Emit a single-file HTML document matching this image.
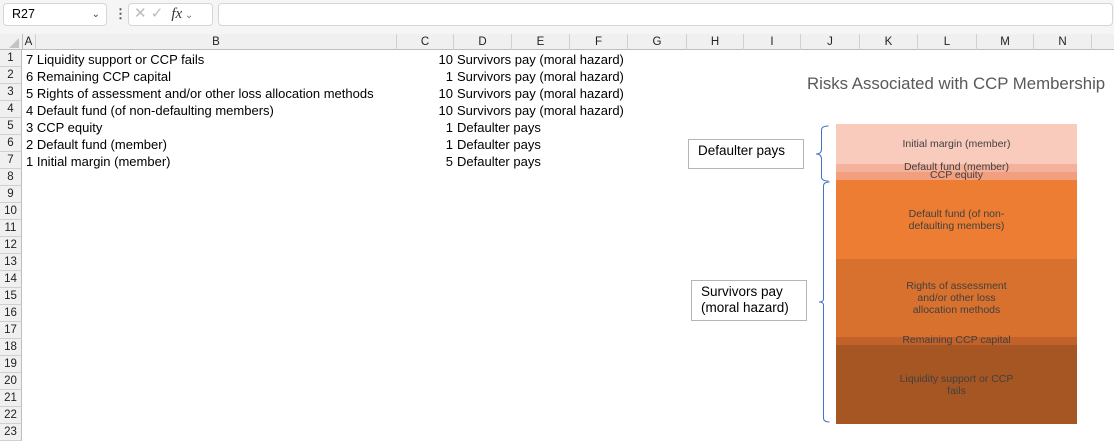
<!DOCTYPE html><html><head><style>
*{margin:0;padding:0;box-sizing:border-box}
body{width:1114px;height:432px;overflow:hidden;background:#fff;font-family:"Liberation Sans",Arial,sans-serif;position:relative}
.a{position:absolute}
.top{left:0;top:0;width:1114px;height:34px;background:#f5f5f5}
.box{background:#fff;border:1px solid #d6d6d6;border-radius:4px}
.hdr{left:0;top:34px;width:1114px;height:16px;background:#f0f0f0;border-bottom:1px solid #bdbdbd}
.ch{top:34px;height:16px;font-size:11.5px;text-align:center;line-height:16px;color:#222;border-right:1px solid #d0d0d0}
.rh{left:0;width:22px;height:17px;background:#f0f0f0;border-right:1px solid #bdbdbd;border-bottom:1px solid #d0d0d0;font-size:11.5px;text-align:center;line-height:17px;color:#222}
.t{font-size:13px;line-height:17px;color:#000;white-space:nowrap}
.seg{left:836px;width:241px;color:#404040;font-size:10.5px;text-align:center;line-height:12px;display:flex;align-items:center;justify-content:center}
.lab{background:#fff;border:1px solid #b5b5b5;font-size:13.5px;line-height:16px;padding:3px 9px;color:#000}
.sl{left:836px;width:241px;text-align:center;font-size:10.5px;color:#404040}
</style></head><body>
<div class="a top"></div>
<div class="a box" style="left:3px;top:3px;width:104px;height:23px;font-size:12.5px;line-height:21px;padding-left:8px">R27<span style="position:absolute;right:6px;top:0;font-size:10px;color:#444">&#8964;</span></div>
<div class="a" style="left:114px;top:6px;font-size:13px;font-weight:bold;color:#555">&#8942;</div>
<div class="a box" style="left:128px;top:3px;width:85px;height:23px;color:#bbb;font-size:15px;line-height:20px;padding-left:5px">&#10005;&nbsp;&#10003;<span style="color:#333;font-family:'Liberation Serif',serif;font-style:italic;font-size:15px;margin-left:8px">fx</span><span style="font-size:10px;color:#777"> &#8964;</span></div>
<div class="a box" style="left:218px;top:3px;width:895px;height:23px"></div>
<div class="a hdr"></div>
<svg class="a" style="left:6px;top:38px" width="14" height="11"><polygon points="13,0 13,10 3,10" fill="#c4c4c4"/></svg>
<div class="a" style="left:22px;top:34px;width:1px;height:16px;background:#bdbdbd"></div>
<div class="a ch" style="left:22px;width:14px">A</div>
<div class="a ch" style="left:36px;width:361px">B</div>
<div class="a ch" style="left:397px;width:57px">C</div>
<div class="a ch" style="left:454px;width:58px">D</div>
<div class="a ch" style="left:512px;width:58px">E</div>
<div class="a ch" style="left:570px;width:58px">F</div>
<div class="a ch" style="left:628px;width:59px">G</div>
<div class="a ch" style="left:687px;width:57px">H</div>
<div class="a ch" style="left:744px;width:57px">I</div>
<div class="a ch" style="left:801px;width:59px">J</div>
<div class="a ch" style="left:860px;width:58px">K</div>
<div class="a ch" style="left:918px;width:59px">L</div>
<div class="a ch" style="left:977px;width:57px">M</div>
<div class="a ch" style="left:1034px;width:58px">N</div>
<div class="a rh" style="top:50px">1</div><div class="a rh" style="top:67px">2</div><div class="a rh" style="top:84px">3</div><div class="a rh" style="top:101px">4</div><div class="a rh" style="top:118px">5</div><div class="a rh" style="top:135px">6</div><div class="a rh" style="top:152px">7</div><div class="a rh" style="top:169px">8</div><div class="a rh" style="top:186px">9</div><div class="a rh" style="top:203px">10</div><div class="a rh" style="top:220px">11</div><div class="a rh" style="top:237px">12</div><div class="a rh" style="top:254px">13</div><div class="a rh" style="top:271px">14</div><div class="a rh" style="top:288px">15</div><div class="a rh" style="top:305px">16</div><div class="a rh" style="top:322px">17</div><div class="a rh" style="top:339px">18</div><div class="a rh" style="top:356px">19</div><div class="a rh" style="top:373px">20</div><div class="a rh" style="top:390px">21</div><div class="a rh" style="top:407px">22</div><div class="a rh" style="top:424px">23</div>
<div class="a" style="left:26px;top:51px">
<div class="t">7 Liquidity support or CCP fails</div><div class="t">6 Remaining CCP capital</div><div class="t">5 Rights of assessment and/or other loss allocation methods</div><div class="t">4 Default fund (of non-defaulting members)</div><div class="t">3 CCP equity</div><div class="t">2 Default fund (member)</div><div class="t">1 Initial margin (member)</div></div>
<div class="a" style="left:400px;top:51px;width:53px;text-align:right">
<div class="t">10</div><div class="t">1</div><div class="t">10</div><div class="t">10</div><div class="t">1</div><div class="t">1</div><div class="t">5</div></div>
<div class="a" style="left:457px;top:51px">
<div class="t">Survivors pay (moral hazard)</div><div class="t">Survivors pay (moral hazard)</div><div class="t">Survivors pay (moral hazard)</div><div class="t">Survivors pay (moral hazard)</div><div class="t">Defaulter pays</div><div class="t">Defaulter pays</div><div class="t">Defaulter pays</div></div>
<div class="a" style="left:807px;top:74px;font-size:16.8px;color:#595959;white-space:nowrap">Risks Associated with CCP Membership</div>
<div class="a seg" style="top:124px;height:40px;background:#f8cbbd">Initial margin (member)</div>
<div class="a seg" style="top:164px;height:8px;background:#f4b19c"></div>
<div class="a seg" style="top:172px;height:8px;background:#f19f7e"></div>
<div class="a sl" style="top:161px">Default fund (member)</div>
<div class="a sl" style="top:169px">CCP equity</div>
<div class="a seg" style="top:180px;height:79px;background:#ec7d32">Default fund (of non-<br>defaulting members)</div>
<div class="a seg" style="top:259px;height:78px;background:#d8712e">Rights of assessment<br>and/or other loss<br>allocation methods</div>
<div class="a seg" style="top:337px;height:8px;background:#c2622a"></div>
<div class="a sl" style="top:334px">Remaining CCP capital</div>
<div class="a seg" style="top:345px;height:79px;background:#a65622">Liquidity support or CCP<br>fails</div>
<svg class="a" style="left:808px;top:124px" width="30" height="302" fill="none" stroke="#4472c4" stroke-width="1">
<path d="M20.5,2 Q13.5,2 13.5,6 V25 Q13.5,30 8,30 Q13.5,30 13.5,35 V53 Q13.5,57 20.5,57"/>
<path d="M21.5,58 Q15.5,58 15.5,62 V175 Q15.5,178 11,178 Q15.5,178 15.5,181 V294 Q15.5,298 21.5,298"/>
</svg>
<div class="a lab" style="left:688px;top:139px;width:116px;height:30px">Defaulter pays</div>
<div class="a lab" style="left:691px;top:280px;width:116px;height:41px">Survivors pay<br>(moral hazard)</div>
</body></html>
